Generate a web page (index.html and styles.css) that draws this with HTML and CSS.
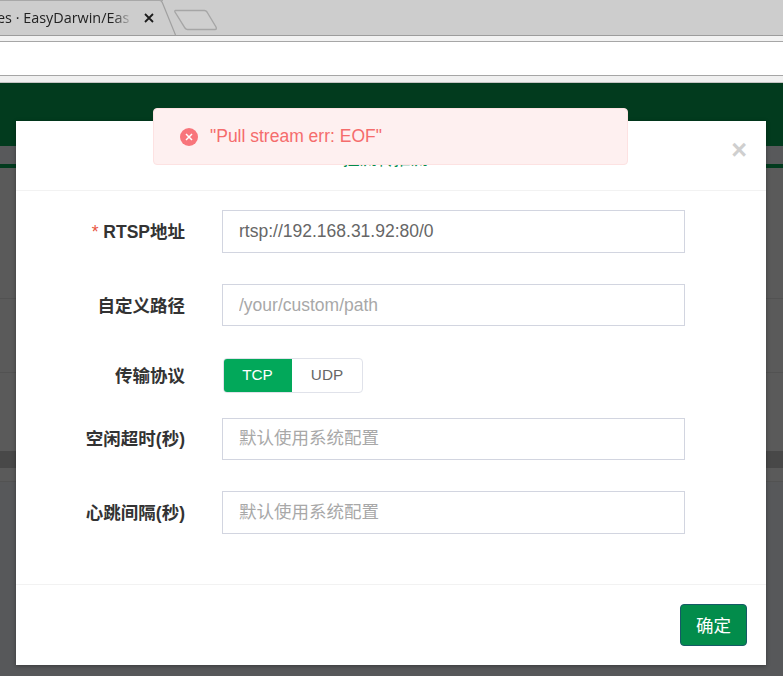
FILE: index.html
```html
<!DOCTYPE html>
<html lang="zh-CN">
<head>
<meta charset="utf-8">
<title>EasyDarwin</title>
<link rel="stylesheet" href="styles.css">
</head>
<body>
<div class="browser">
  <div class="tabstrip">
    <div class="tab">
      <span class="tab-title">es · EasyDarwin/Eas</span>
      <svg class="tab-close" width="12" height="12" viewBox="0 0 12 12"><path d="M2 2 L10 10 M10 2 L2 10" stroke="#1c1c1c" stroke-width="1.8" fill="none"/></svg>
      <svg class="tab-edge" width="20" height="36" viewBox="0 0 20 36"><path d="M0 .5 H1.5 Q3.5 .5 4.5 3 L17.5 35" stroke="#a0a0a0" stroke-width="1.2" fill="none"/></svg>
    </div>
    <svg class="new-tab" width="44" height="22" viewBox="0 0 44 22"><path d="M1.5 1.5 H30.5 Q32 1.5 33 3 L42 18 Q43 20.5 41 20.5 H13.5 Q12 20.5 11 19 L1 3 Q.5 1.5 1.5 1.5 Z" stroke="#a6a6a6" stroke-width="1.4" fill="#cfcfcf"/></svg>
  </div>
  <div class="toolbar-gap"></div>
  <div class="addressbar"></div>
  <div class="toolbar-foot"></div>
</div>

<main class="page">
  <div class="bg-header"></div>
  <div class="bg-nav"></div>
  <div class="bg-accent"></div>
  <div class="bg-row bg-row-first"></div>
  <div class="bg-row bg-row-second"></div>
  <div class="bg-row bg-row-third"></div>
  <div class="bg-dark"></div>
  <div class="bg-row bg-row-fourth"></div>
  <div class="bg-rest"></div>

  <section class="modal">
    <header class="modal-head">
      <h2 class="modal-title">拉流转推流</h2>
      <span class="modal-close">×</span>
    </header>
    <form class="modal-body">
      <div class="field field-first">
        <label class="field-label"><span class="required">*</span> RTSP地址</label>
        <input class="field-input" type="text" value="rtsp://192.168.31.92:80/0">
      </div>
      <div class="field">
        <label class="field-label">自定义路径</label>
        <input class="field-input" type="text" placeholder="/your/custom/path">
      </div>
      <div class="field field-radio">
        <label class="field-label">传输协议</label>
        <div class="radio-group">
          <span class="radio radio-on">TCP</span>
          <span class="radio">UDP</span>
        </div>
      </div>
      <div class="field">
        <label class="field-label">空闲超时(秒)</label>
        <input class="field-input" type="text" placeholder="默认使用系统配置">
      </div>
      <div class="field">
        <label class="field-label">心跳间隔(秒)</label>
        <input class="field-input" type="text" placeholder="默认使用系统配置">
      </div>
    </form>
    <footer class="modal-foot">
      <button class="btn-ok" type="button">确定</button>
    </footer>
  </section>
</main>

<div class="toast">
  <svg class="toast-icon" width="18" height="18" viewBox="0 0 18 18"><circle cx="9" cy="9" r="9" fill="#f8757b"/><path d="M6 6 L12 12 M12 6 L6 12" stroke="#fff" stroke-width="1.5" fill="none"/></svg>
  <span class="toast-text">"Pull stream err: EOF"</span>
</div>
</body>
</html>
```
FILE: styles.css
```css
* { box-sizing: border-box; }
html, body { margin: 0; height: 100%; overflow: hidden; }
body {
  position: relative;
  background: #57585a;
  font-family: "Liberation Sans", "Noto Sans CJK SC", sans-serif;
}

.browser { height: 83px; background: #f2f2f2; }
.tabstrip {
  height: 36px;
  display: flex;
  align-items: flex-start;
  background: #cdcdcd;
  border-bottom: 1px solid #9c9c9c;
  overflow: hidden;
}
.tab {
  width: 178px;
  height: 35px;
  flex: none;
  display: flex;
  align-items: center;
  overflow: hidden;
  border-top: 1px solid #a8a8a8;
  border-image: linear-gradient(to right, #a8a8a8 162px, transparent 162px) 1;
}
.tab-title {
  width: 136px;
  flex: none;
  margin-left: -3px;
  font-family: "Open Sans", sans-serif;
  font-size: 14.4px;
  line-height: 36px;
  height: 36px;
  color: #222;
  white-space: nowrap;
  -webkit-mask-image: linear-gradient(to right, #000 116px, transparent 136px);
  mask-image: linear-gradient(to right, #000 116px, transparent 136px);
}
.tab-close { flex: none; margin-left: 10px; }
.tab-edge { flex: none; margin-left: 3px; margin-top: -1px; align-self: flex-start; }
.new-tab { flex: none; margin: 9px 0 0 -4px; }
.toolbar-gap { height: 5px; background: #f2f2f2; }
.addressbar {
  height: 35px;
  background: #fff;
  border-top: 1px solid #a6a6a6;
  border-bottom: 1px solid #a6a6a6;
}
.toolbar-foot { height: 7px; background: #f0f0f0; border-bottom: 1px solid #c4c4c4; }

.page { position: relative; height: 593px; display: flex; flex-direction: column; }
.bg-header { height: 63px; background: #023b1e; flex: none; }
.bg-nav { height: 18px; background: #58595b; flex: none; }
.bg-accent { height: 4px; background: #023b1e; flex: none; }
.bg-row { flex: none; background: #5a5a5a; border-bottom: 1px solid #525252; }
.bg-row-first { height: 131px; }
.bg-row-second { height: 74px; }
.bg-row-third { height: 78px; border-bottom: 0; }
.bg-dark { height: 17px; background: #484848; flex: none; }
.bg-row-fourth { height: 14px; }
.bg-rest { flex: 1; background: #57585a; }

.modal {
  position: absolute;
  left: 16px;
  top: 38px;
  width: 750px;
  height: 544px;
  display: flex;
  flex-direction: column;
  background: #fff;
  box-shadow: 0 1px 4px rgba(0, 0, 0, .35);
}
.modal-head {
  height: 70px;
  flex: none;
  display: flex;
  align-items: flex-end;
  justify-content: center;
  position: relative;
  padding-right: 12px;
  border-bottom: 1px solid #f2f2f2;
}
.modal-title {
  margin: 0 0 18.5px;
  font-size: 17px;
  line-height: 24px;
  font-weight: 400;
  color: #028c4b;
}
.modal-close {
  position: absolute;
  right: 19px;
  top: 13px;
  font-size: 27px;
  line-height: 32px;
  font-weight: 700;
  color: #cfcfcf;
}
.modal-body { flex: 1; padding-top: 19px; }
.field {
  display: flex;
  align-items: center;
  height: 42.5px;
  margin-bottom: 31.25px;
}
.field-radio { height: 35px; margin-bottom: 25px; }
.field-label {
  width: 169px;
  flex: none;
  padding-bottom: 2px;
  text-align: right;
  font-size: 17.5px;
  font-weight: 700;
  color: #333;
}
.required { color: #e9553f; font-weight: 400; }
.field-input {
  width: 463px;
  height: 100%;
  margin-left: 37px;
  padding: 0 16px;
  border: 1px solid #d2d5e0;
  background: #fff;
  outline: 0;
  font: 17.5px "Liberation Sans", "Noto Sans CJK SC", sans-serif;
  color: #666;
}
.field-input::placeholder { color: #a8a8a8; opacity: 1; }
.radio-group {
  display: flex;
  margin-left: 38px;
  width: 140px;
  height: 35px;
  border: 1px solid #e0e2ea;
  border-radius: 4px;
  overflow: hidden;
  font-size: 15.3px;
}
.radio {
  flex: 1;
  display: flex;
  align-items: center;
  justify-content: center;
  color: #666;
}
.radio-on { flex: none; width: 69px; margin: -1px 0 -1px -1px; background: #02a85a; color: #fff; }
.modal-foot {
  height: 81px;
  flex: none;
  display: flex;
  align-items: flex-start;
  justify-content: flex-end;
  padding: 19px 19px 0 0;
  border-top: 1px solid #f2f2f2;
}
.btn-ok {
  width: 67px;
  height: 42px;
  padding: 0 0 2px;
  border: 1px solid #165a66;
  border-radius: 4px;
  background: #028c4b;
  color: #fff;
  font: 17.5px "Noto Sans CJK SC", sans-serif;
}

.toast {
  position: absolute;
  left: 153px;
  top: 108px;
  width: 475px;
  height: 57px;
  display: flex;
  align-items: center;
  gap: 12px;
  padding-left: 26px;
  background: #fef0f0;
  border: 1px solid #fde2e2;
  border-radius: 4px;
}
.toast-icon { flex: none; }
.toast-text { font-size: 17.5px; color: #f56c6c; }
```
